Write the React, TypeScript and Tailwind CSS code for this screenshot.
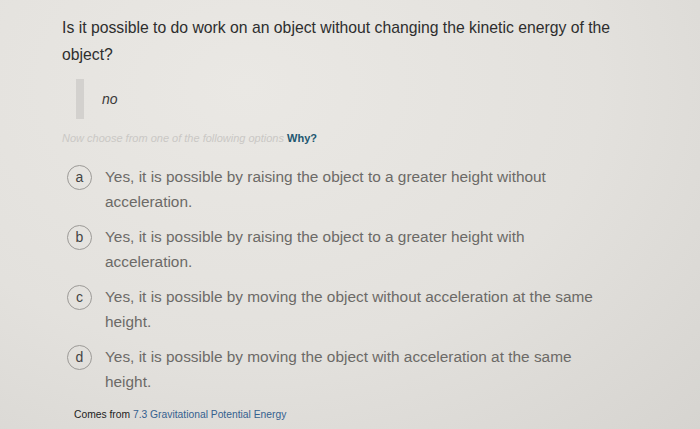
const options = [
  { key: "a", text: "Yes, it is possible by raising the object to a greater height without acceleration." },
  { key: "b", text: "Yes, it is possible by raising the object to a greater height with acceleration." },
  { key: "c", text: "Yes, it is possible by moving the object without acceleration at the same height." },
  { key: "d", text: "Yes, it is possible by moving the object with acceleration at the same height." },
];

export default function App() {
  return (
    <div
      className="h-[429px] w-[700px] overflow-hidden bg-[radial-gradient(ellipse_at_35%_20%,#eae8e4_0%,#e3e1dd_55%,#d6d4d0_100%)] pl-[62px] pt-[14px]"
      style={{ fontFamily: '"Liberation Sans", Arial, sans-serif' }}
    >
      <p className="w-[580px] text-[15.75px] leading-[27px] text-[#2e2e2e]">
        Is it possible to do work on an object without changing the kinetic energy of the object?
      </p>

      <div className="mt-[11px] ml-[14px] flex items-center">
        <div className="h-[40px] w-[8px] bg-[#d3d1ce]" />
        <span className="ml-[18px] text-[14px] italic text-[#3a3a3a]">no</span>
      </div>

      <p className="mt-[11px] text-[11px] italic text-[#cac8c5]">
        Now choose from one of the following options{" "}
        <span className="font-bold not-italic text-[#225670]">Why?</span>
      </p>

      <div className="mt-[18px] flex flex-col gap-[11px] pl-[5px]">
        {options.map((o) => (
          <div key={o.key} className="flex items-start">
            <div className="flex h-[25px] w-[25px] shrink-0 items-center justify-center rounded-full border-[1.5px] border-[#9c9a97] text-[14px] text-[#444]">
              {o.key}
            </div>
            <p className="ml-[13px] w-[500px] text-[15.4px] leading-[25px] text-[#6c6a67] -mt-[1px]">
              {o.text}
            </p>
          </div>
        ))}
      </div>

      <p className="mt-[13px] pl-[12px] text-[10.3px] text-[#222]">
        Comes from <span className="text-[#35618f]">7.3 Gravitational Potential Energy</span>
      </p>
    </div>
  );
}
